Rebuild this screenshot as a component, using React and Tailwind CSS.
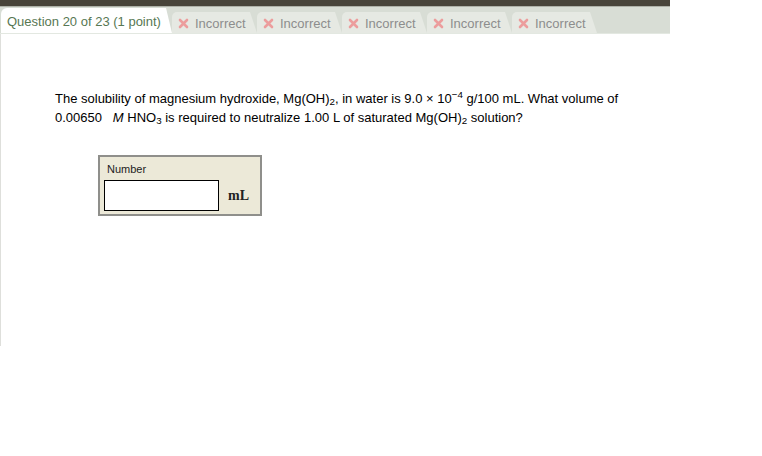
import React from 'react';

const XIcon = () => (
    <svg width="11" height="11" viewBox="0 0 11 11" className="shrink-0">
        <path d="M2 2 L9 9 M9 2 L2 9" stroke="#ec9d9d" strokeWidth="2.6" strokeLinecap="round" />
    </svg>
);

const IncorrectTab = () => (
    <div className="relative w-[85px] h-[21px] shrink-0 bg-[#e6e9e3] rounded-tl-[5px] [clip-path:polygon(0_0,calc(100%-7px)_0,100%_100%,0_100%)] flex items-center pl-[6px] pt-[2px] gap-[6px]">
        <XIcon />
        <span className="text-[13px] text-[#8d8d8d] leading-none">Incorrect</span>
    </div>
);

export default function App() {
    return (
        <div className="w-[762px] h-[456px] bg-white font-['Liberation_Sans',Arial,sans-serif]">
            <div className="w-[670px]">
                {/* top bar */}
                <div className="h-[6px] bg-[#48443a]" />
                <div className="h-[1px] bg-[#aeb1a8]" />
                {/* tab strip */}
                <div className="h-[27px] bg-[#d8ddd5] flex items-end border-b border-[#e3e8e1]">
                    <div className="w-[171px] h-[25px] shrink-0 ml-[1px] bg-white rounded-tl-[6px] [clip-path:polygon(0_0,calc(100%-6px)_0,100%_100%,0_100%)] flex items-center pl-[6px] pt-[1px]">
                        <span className="text-[13px] text-[#577753] leading-none">Question 20 of 23 (1 point)</span>
                    </div>
                    <IncorrectTab />
                    <IncorrectTab />
                    <IncorrectTab />
                    <IncorrectTab />
                    <IncorrectTab />
                </div>
                {/* question body */}
                <div className="h-[312px] border-l border-[#dedfdb] pt-[55px] pl-[54px]">
                    <p className="text-[13px] leading-[19px] text-black">
                        The solubility of magnesium hydroxide, Mg(OH)<sub>2</sub>, in water is 9.0 × 10<sup>−4</sup> g/100 mL. What volume of
                        <br />
                        0.00650&nbsp;&nbsp; <i>M</i> HNO<sub>3</sub> is required to neutralize 1.00 L of saturated Mg(OH)<sub>2</sub> solution?
                    </p>
                    <div className="mt-[28px] ml-[43px] w-[164px] h-[61px] bg-[#ece9d8] border-2 border-[#8f8f8b] pl-[4px] pt-[6px]">
                        <div className="text-[11px] leading-[13px] text-[#222] pl-[3px]">Number</div>
                        <div className="flex items-center mt-[4px]">
                            <div className="w-[115px] h-[31px] bg-white border border-black" />
                            <span className="ml-[9px] font-['Liberation_Serif',serif] font-bold text-[14px] text-[#222]">mL</span>
                        </div>
                    </div>
                </div>
            </div>
        </div>
    );
}
